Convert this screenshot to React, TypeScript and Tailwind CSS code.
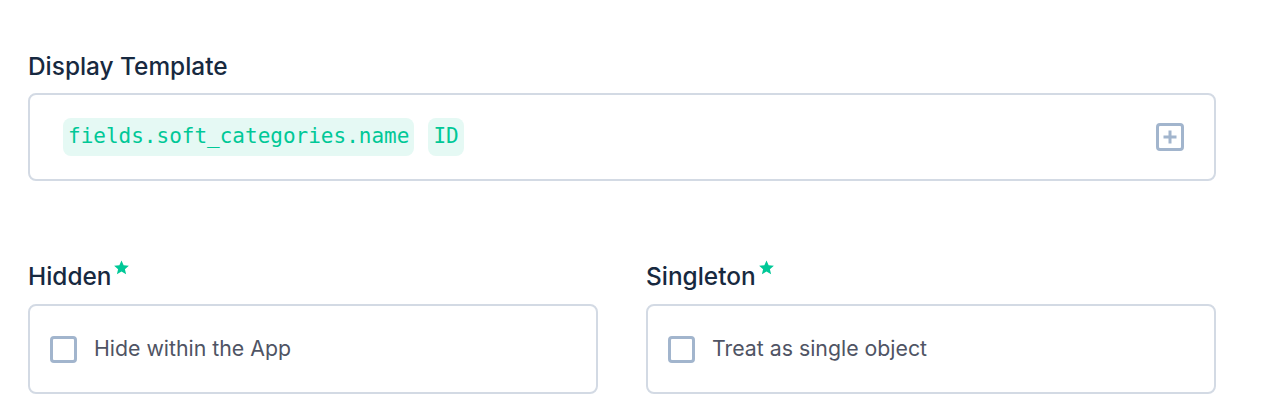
const sans = { fontFamily: "Inter, 'Noto Sans', sans-serif" };

function Star() {
  return (
    <svg width="17" height="17" viewBox="0 0 24 24" className="ml-[2px] -mt-[18px] shrink-0">
      <path
        fill="#00c897"
        d="M12 2l3 6.8 7.4.7-5.6 4.9 1.7 7.3-6.5-3.9-6.5 3.9 1.7-7.3L1.6 9.5 9 8.8z"
      />
    </svg>
  );
}

function Label({ text, required }: { text: string; required?: boolean }) {
  return (
    <div className="flex items-center text-[24.4px] leading-[29px] font-medium text-[#172940]">
      <span>{text}</span>
      {required && <Star />}
    </div>
  );
}

function Chip({ children }: { children: string }) {
  return (
    <span
      className="h-[38px] px-[5px] flex items-center rounded-[8px] bg-[#e5f9f4] text-[#00c897] text-[21px]"
      style={{ fontFamily: "'DejaVu Sans Mono', 'Liberation Mono', monospace" }}
    >
      {children}
    </span>
  );
}

function AddBox() {
  return (
    <svg width="28" height="28" viewBox="0 0 28 28" fill="none" stroke="#a2b5cd" strokeWidth="3">
      <rect x="1.5" y="1.5" width="25" height="25" rx="2.5" />
      <path d="M14 7.5v13M7.5 14h13" />
    </svg>
  );
}

function CheckField({ label, text }: { label: string; text: string }) {
  return (
    <div className="flex flex-col">
      <Label text={label} required />
      <div className="mt-[13px] h-[90px] rounded-[8px] border-2 border-[#d3dae4] flex items-center pl-[20px]">
        <span className="w-[27px] h-[27px] rounded-[4px] border-[3px] border-[#a2b5cd] shrink-0" />
        <span className="ml-[17px] text-[21.3px] text-[#4f5464]">{text}</span>
      </div>
    </div>
  );
}

export default function App() {
  return (
    <div className="w-[1278px] h-[410px] bg-white pl-[28px] pt-[52px]" style={sans}>
      <div className="w-[1188px]">
        <Label text="Display Template" />
        <div className="mt-[12px] h-[88px] rounded-[8px] border-2 border-[#d3dae4] flex items-center pl-[33px] pr-[30px]">
          <div className="flex items-center gap-[14px]">
            <Chip>fields.soft_categories.name</Chip>
            <Chip>ID</Chip>
          </div>
          <div className="ml-auto flex">
            <AddBox />
          </div>
        </div>
        <div className="mt-[81px] grid grid-cols-2 gap-[48px]">
          <CheckField label="Hidden" text="Hide within the App" />
          <CheckField label="Singleton" text="Treat as single object" />
        </div>
      </div>
    </div>
  );
}
